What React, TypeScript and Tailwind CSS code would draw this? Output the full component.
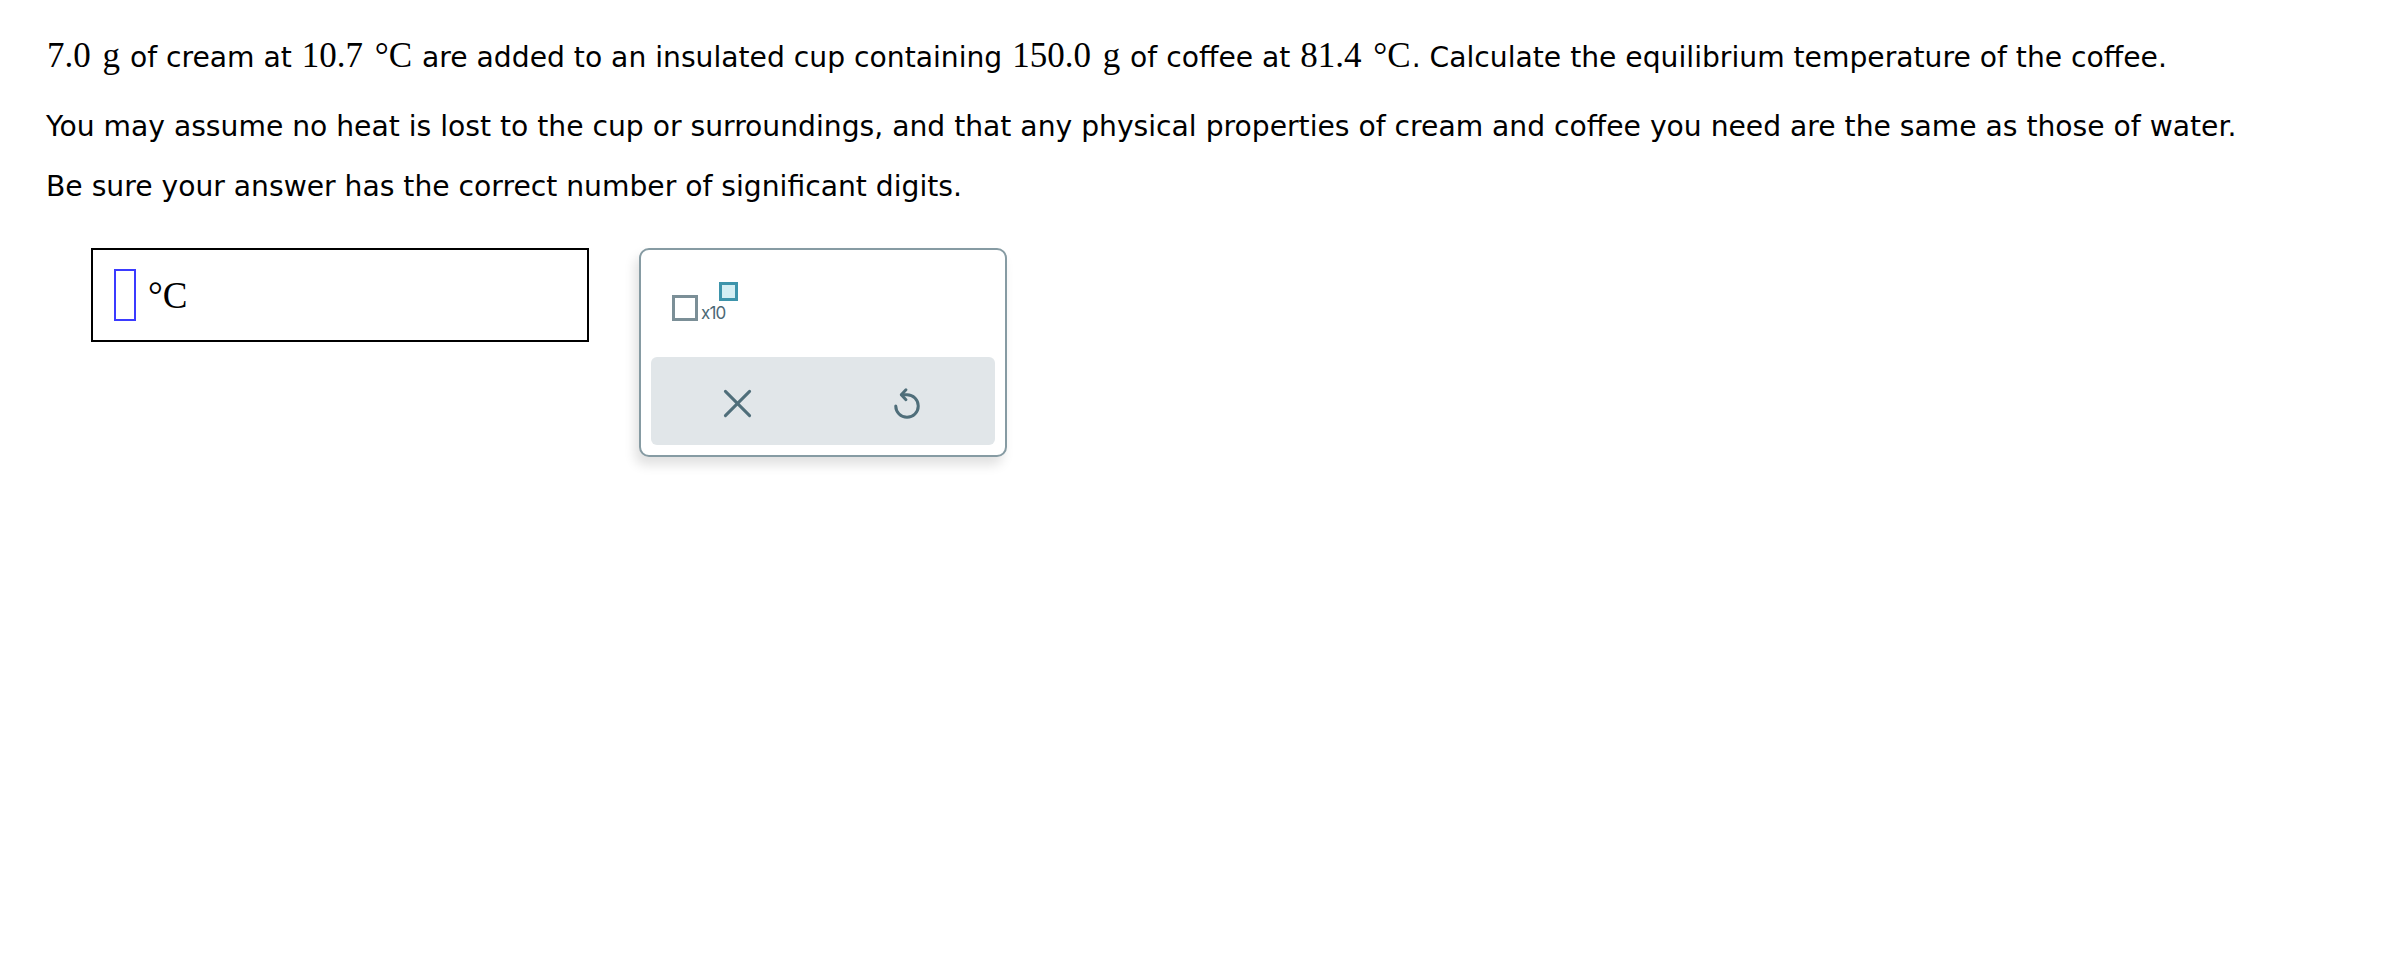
import React from "react";

const M: React.FC<{ children: React.ReactNode }> = ({ children }) => (
  <span className="px-[1px] font-['Liberation_Serif',serif] text-[35px] leading-none">{children}</span>
);

const App: React.FC = () => {
  return (
    <div className="min-h-screen bg-white text-black font-['DejaVu_Sans',Verdana,sans-serif] text-[28.2px] pl-[46px]">
      <p className="pt-[38px] leading-[40px] whitespace-nowrap">
        <M>7.0{"\u2004"}g</M> of cream at <M>10.7{"\u2004"}°C</M> are added to an insulated cup containing{" "}
        <M>150.0{"\u2004"}g</M> of coffee at <M>81.4{"\u2004"}°C</M>. Calculate the equilibrium temperature of the coffee.
      </p>
      <p className="mt-[29px] leading-[40px] whitespace-nowrap">
        You may assume no heat is lost to the cup or surroundings, and that any physical properties of cream and coffee
        you need are the same as those of water.
      </p>
      <p className="mt-[20px] leading-[40px] whitespace-nowrap">
        Be sure your answer has the correct number of significant digits.
      </p>

      <div className="mt-[41px] flex items-start">
        <div className="ml-[45px] w-[498px] h-[94px] border-2 border-black flex items-center pl-[21px]">
          <div className="w-[22px] h-[52px] border-2 border-[#3b3bff]" />
          <span className="ml-[12px] font-['Liberation_Serif',serif] text-[37px] leading-none">°C</span>
        </div>

        <div className="ml-[50px] w-[368px] h-[209px] rounded-[10px] border-2 border-[#869ba3] bg-white shadow-[-4px_8px_12px_rgba(0,0,0,0.12)] px-[10px] pb-[10px] flex flex-col">
          <div className="flex-1 pt-[32px] pl-[21px]">
            <div className="flex items-start">
              <div className="mt-[13px] w-[26px] h-[26px] border-[3px] border-[#7b8f97]" />
              <span className="mt-[23px] ml-[3px] font-['Inter',sans-serif] text-[17px] leading-none text-[#4b6875] tracking-[-0.8px]">
                x10
              </span>
              <div className="-ml-[7px] w-[19px] h-[19px] border-[3px] border-[#3d94ab] bg-[#d4eef3]" />
            </div>
          </div>
          <div className="h-[88px] rounded-[6px] bg-[#e1e6e9] flex items-center justify-between pt-[4px] pl-[72px] pr-[70px]">
            <svg width="29" height="29" viewBox="0 0 24 24" fill="none" stroke="#4f6e7a" strokeWidth="2.5" strokeLinecap="round">
              <path d="M2 2 L22 22" />
              <path d="M22 2 L2 22" />
            </svg>
            <svg width="36" height="36" viewBox="0 0 24 24" fill="none" stroke="#4f6e7a" strokeWidth="2" strokeLinecap="round" strokeLinejoin="round">
              <path d="M8.5 6.5 H12 A7.5 7.5 0 1 1 4.5 14" />
              <path d="M11.3 3.2 L8.2 6.5 L11.3 9.8" />
            </svg>
          </div>
        </div>
      </div>
    </div>
  );
};

export default App;
